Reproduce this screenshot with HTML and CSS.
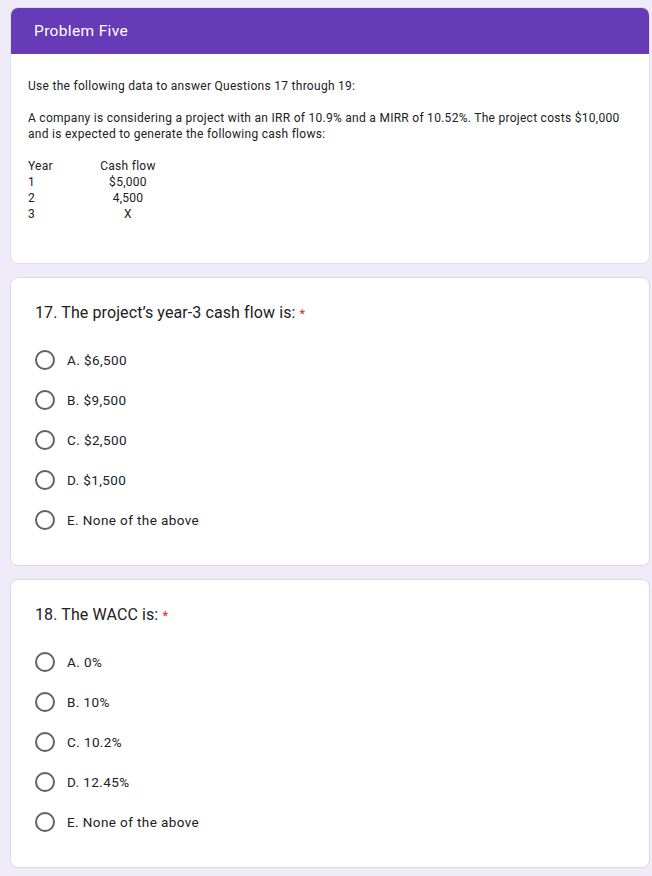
FILE: index.html
```html
<!DOCTYPE html>
<html>
<head>
<meta charset="utf-8">
<link rel="stylesheet" href="styles.css">
</head>
<body>
<div class="page">
  <section class="card intro">
    <header class="card-head">Problem Five</header>
    <div class="card-body">
      <p class="line">Use the following data to answer Questions 17 through 19:</p>
      <p class="line blank"></p>
      <p class="line">A company is considering a project with an IRR of 10.9% and a MIRR of 10.52%. The project costs $10,000</p>
      <p class="line">and is expected to generate the following cash flows:</p>
      <p class="line blank"></p>
      <div class="table">
        <span>Year</span><span class="cf">Cash flow</span>
        <span>1</span><span class="cf">$5,000</span>
        <span>2</span><span class="cf">4,500</span>
        <span>3</span><span class="cf">X</span>
      </div>
    </div>
  </section>

  <section class="card question">
    <h2 class="q-title">17. The project’s year-3 cash flow is: <span class="req">*</span></h2>
    <ul class="options">
      <li class="opt"><span class="radio"></span><span class="label">A. $6,500</span></li>
      <li class="opt"><span class="radio"></span><span class="label">B. $9,500</span></li>
      <li class="opt"><span class="radio"></span><span class="label">C. $2,500</span></li>
      <li class="opt"><span class="radio"></span><span class="label">D. $1,500</span></li>
      <li class="opt"><span class="radio"></span><span class="label">E. None of the above</span></li>
    </ul>
  </section>

  <section class="card question">
    <h2 class="q-title">18. The WACC is: <span class="req">*</span></h2>
    <ul class="options">
      <li class="opt"><span class="radio"></span><span class="label">A. 0%</span></li>
      <li class="opt"><span class="radio"></span><span class="label">B. 10%</span></li>
      <li class="opt"><span class="radio"></span><span class="label">C. 10.2%</span></li>
      <li class="opt"><span class="radio"></span><span class="label">D. 12.45%</span></li>
      <li class="opt"><span class="radio"></span><span class="label">E. None of the above</span></li>
    </ul>
  </section>
</div>
</body>
</html>
```

FILE: styles.css
```css
html, body {
  margin: 0;
  padding: 0;
  background: #f0ebf8;
}
body {
  font-family: Roboto, "Liberation Sans", Arial, sans-serif;
  color: #202124;
}
.page {
  padding: 7px 2px 9px 10px;
  display: flex;
  flex-direction: column;
  gap: 13px;
}
.card {
  background: #fff;
  border: 1px solid #dadce0;
  border-radius: 8px;
  overflow: hidden;
  box-sizing: border-box;
}
.intro {
  border-color: #e0dce8;
}
.card-head {
  background: #673ab7;
  color: #fff;
  height: 47px;
  margin: -1px -1px 0 -1px;
  padding-left: 24px;
  display: flex;
  align-items: center;
  font-size: 15.5px;
  font-weight: 400;
  letter-spacing: 0.35px;
}
.card-body {
  padding: 24px 17px 41px 17px;
  font-size: 12px;
  line-height: 16px;
  letter-spacing: 0.28px;
  color: #202124;
}
.line {
  margin: 0;
  min-height: 16px;
}
.table {
  display: grid;
  grid-template-columns: 72px 56px;
  line-height: 16px;
}
.cf {
  text-align: center;
}
.question {
  padding: 23px 24px 25px 24px;
}
.q-title {
  margin: 0;
  font-size: 16px;
  line-height: 24px;
  font-weight: 400;
  letter-spacing: 0.1px;
  color: #202124;
}
.req {
  color: #d93025;
  font-size: 13px;
}
.options {
  list-style: none;
  margin: 14px 0 0 0;
  padding: 0;
}
.opt {
  height: 40px;
  display: flex;
  align-items: center;
  gap: 12px;
}
.radio {
  width: 20px;
  height: 20px;
  border: 2px solid #5f6368;
  border-radius: 50%;
  box-sizing: border-box;
  flex: none;
}
.label {
  font-size: 13.5px;
  letter-spacing: 0.4px;
  color: #202124;
}
```
